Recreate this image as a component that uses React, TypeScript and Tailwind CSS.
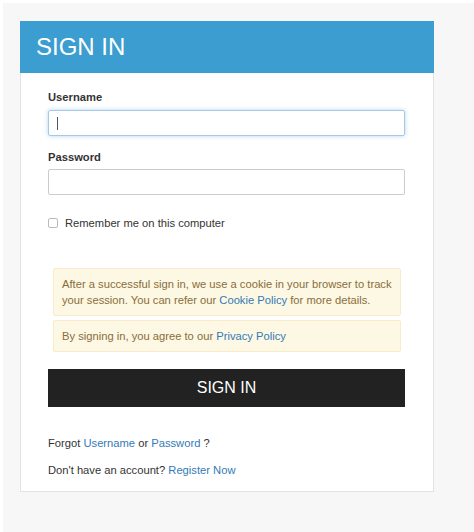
import React, { useState } from 'react';

export default function App() {
  const [remember, setRemember] = useState(false);

  return (
    <div className="w-[474px] h-[532px] bg-white pt-[3px] pl-[3px]" style={{ fontFamily: '"Liberation Sans", Arial, sans-serif' }}>
      <div className="h-full bg-[#f7f7f7] pt-[18px] pl-[17px]">
        <div className="w-[414px] bg-white border border-[#e3e3e3] border-t-0">
          <div className="h-[52px] bg-[#3b9dd0] flex items-center px-4 -mx-px">
            <h1 className="text-white text-[24px] leading-none">SIGN IN</h1>
          </div>

          <div className="px-[27px] pt-[17px] pb-[14px]">
            <label className="block text-[11.2px] font-bold text-[#333] leading-[14px]">Username</label>
            <div className="mt-[6px] h-[26px] w-[357px] border border-[#a8c9e6] rounded-[2px] shadow-[0_0_4px_rgba(102,175,233,0.5)] flex items-center px-2">
              <span className="w-px h-[13px] bg-[#555]" />
            </div>

            <label className="block mt-[14px] text-[11.2px] font-bold text-[#333] leading-[14px]">Password</label>
            <input
              type="password"
              className="mt-[5px] block h-[26px] w-[357px] border border-[#ccc] rounded-[2px] outline-none"
            />

            <label className="flex items-center gap-[7px] mt-[21px] text-[11.2px] text-[#333] leading-[14px] cursor-pointer">
              <input
                type="checkbox"
                checked={remember}
                onChange={() => setRemember(!remember)}
                className="appearance-none w-[10px] h-[10px] border border-[#bbb] rounded-[2px] bg-white"
              />
              Remember me on this computer
            </label>

            <div className="mt-[38px] mx-[5px] w-[348px] bg-[#fcf8e3] border border-[#faebcc] rounded-[2px] px-2 py-[7px] text-[11.2px] leading-4 text-[#8a6d3b]">
              After a successful sign in, we use a cookie in your browser to track your session. You can refer our{' '}
              <a className="text-[#337ab7]" href="#">Cookie Policy</a> for more details.
            </div>
            <div className="mt-[4px] mx-[5px] w-[348px] bg-[#fcf8e3] border border-[#faebcc] rounded-[2px] px-2 py-[7px] text-[11.2px] leading-4 text-[#8a6d3b]">
              By signing in, you agree to our <a className="text-[#337ab7]" href="#">Privacy Policy</a>
            </div>

            <button className="mt-[17px] block w-[357px] h-[38px] bg-[#222] text-white text-[16px]">SIGN IN</button>

            <p className="mt-[29px] text-[11.2px] text-[#333] leading-[14px]">
              Forgot <a className="text-[#337ab7]" href="#">Username</a> or{' '}
              <a className="text-[#337ab7]" href="#">Password</a> ?
            </p>
            <p className="mt-[13px] text-[11.2px] text-[#333] leading-[14px]">
              Don't have an account? <a className="text-[#337ab7]" href="#">Register Now</a>
            </p>
          </div>
        </div>
      </div>
    </div>
  );
}
